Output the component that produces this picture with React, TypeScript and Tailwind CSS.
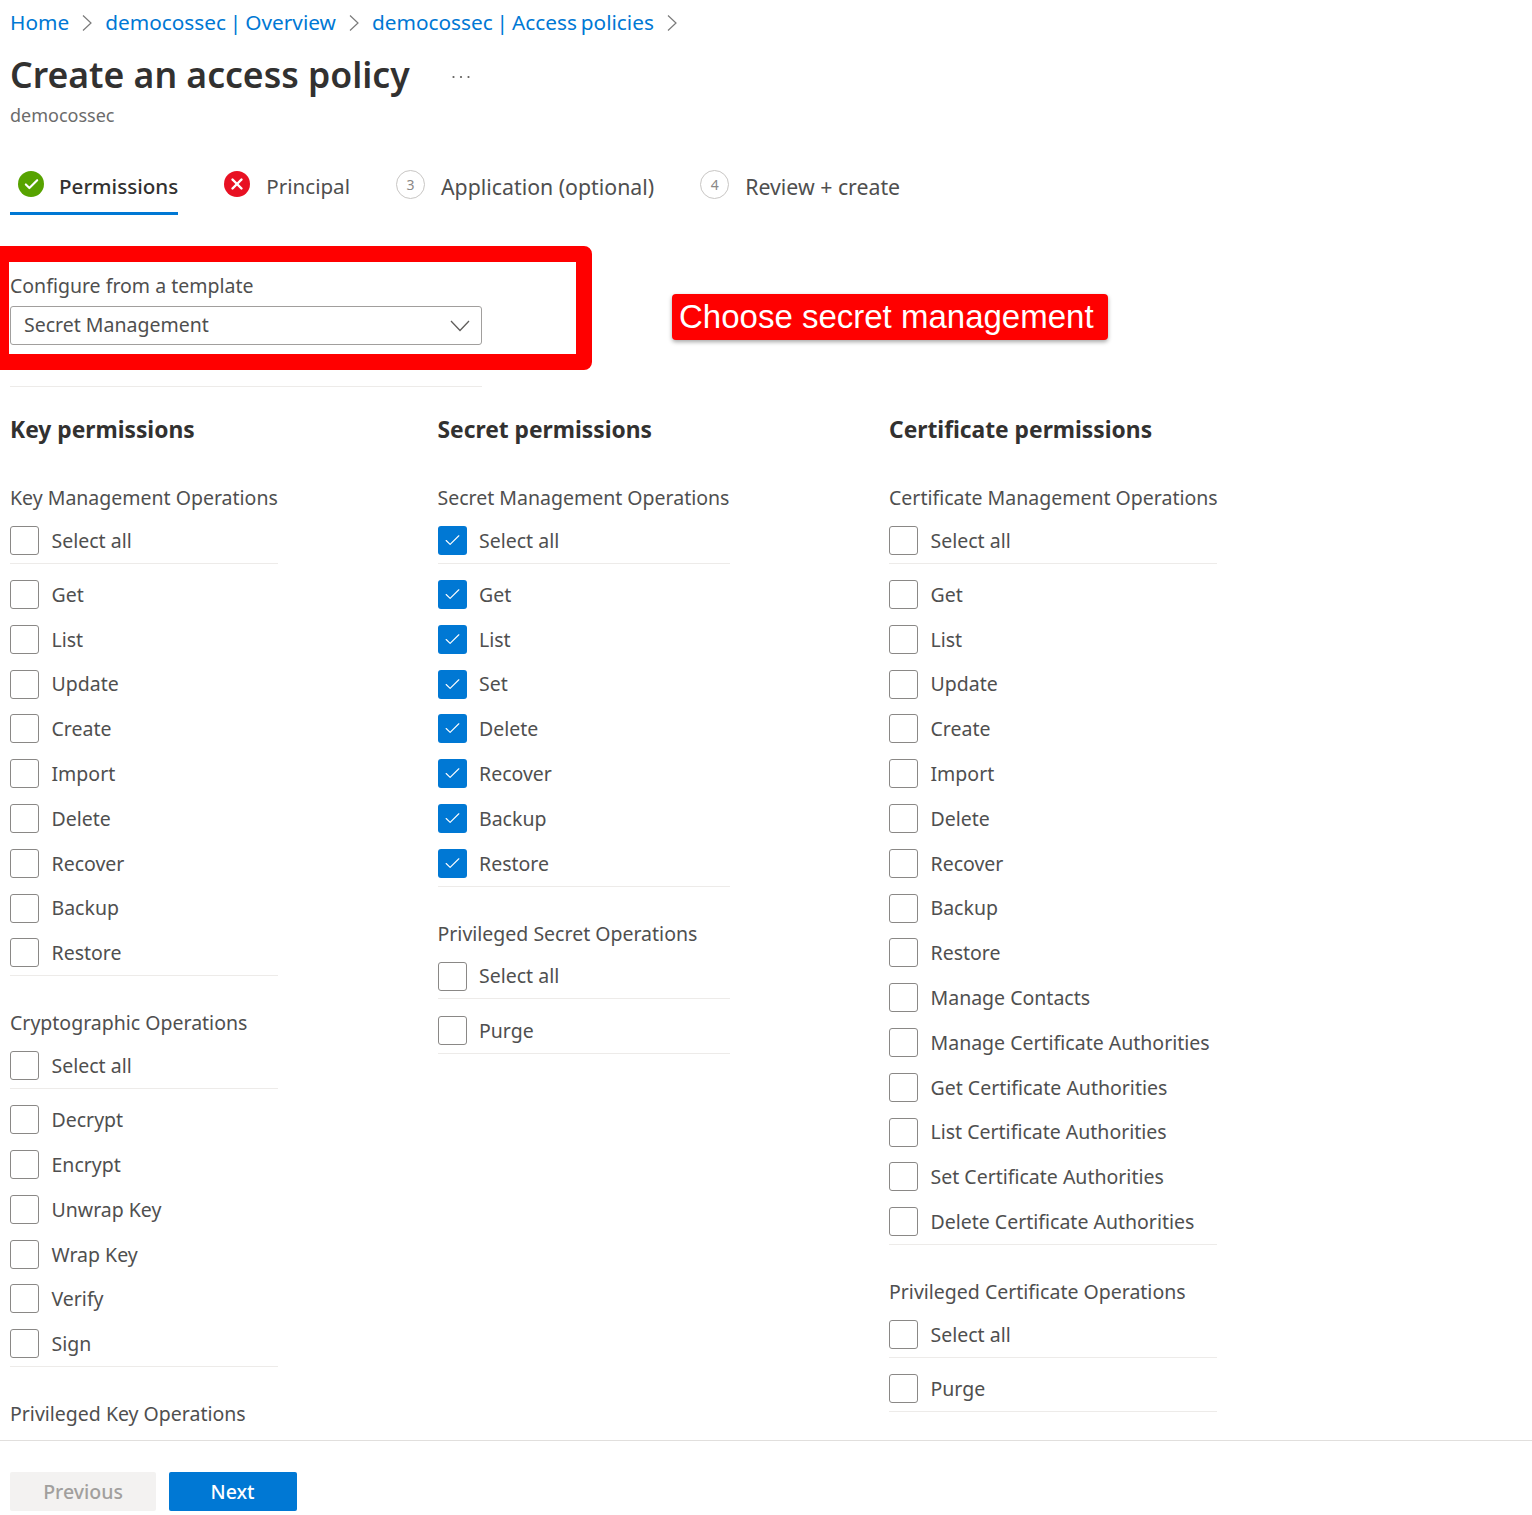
import { Check, X } from 'lucide-react';

type Section = { title: string; checked?: boolean; items: string[] };

const keySections: Section[] = [
  { title: 'Key Management Operations', items: ['Get', 'List', 'Update', 'Create', 'Import', 'Delete', 'Recover', 'Backup', 'Restore'] },
  { title: 'Cryptographic Operations', items: ['Decrypt', 'Encrypt', 'Unwrap Key', 'Wrap Key', 'Verify', 'Sign'] },
  { title: 'Privileged Key Operations', items: [] },
];

const secretSections: Section[] = [
  { title: 'Secret Management Operations', checked: true, items: ['Get', 'List', 'Set', 'Delete', 'Recover', 'Backup', 'Restore'] },
  { title: 'Privileged Secret Operations', items: ['Purge'] },
];

const certSections: Section[] = [
  {
    title: 'Certificate Management Operations',
    items: ['Get', 'List', 'Update', 'Create', 'Import', 'Delete', 'Recover', 'Backup', 'Restore', 'Manage Contacts', 'Manage Certificate Authorities', 'Get Certificate Authorities', 'List Certificate Authorities', 'Set Certificate Authorities', 'Delete Certificate Authorities'],
  },
  { title: 'Privileged Certificate Operations', items: ['Purge'] },
];

function Box({ checked }: { checked?: boolean }) {
  if (checked) {
    return (
      <span className="flex h-[29px] w-[29px] shrink-0 items-center justify-center rounded-[3px] bg-[#0078d4]">
        <Check size={19} strokeWidth={1.4} className="text-white" />
      </span>
    );
  }
  return <span className="h-[29px] w-[29px] shrink-0 rounded-[3px] border border-[#8a8886] bg-white" />;
}

function Row({ label, checked }: { label: string; checked?: boolean }) {
  return (
    <div className="flex h-[44.8px] items-center gap-[12.5px] text-[19.5px] text-[#4f4f4f]">
      <Box checked={checked} />
      <span className="whitespace-nowrap">{label}</span>
    </div>
  );
}

function PermissionGroup({ section }: { section: Section }) {
  return (
    <div className="mb-[24px]">
      <p className="flex h-[43px] items-center whitespace-nowrap pt-[2px] text-[19.5px] text-[#4f4f4f]">{section.title}</p>
      {section.items.length > 0 && (
        <>
          <div className="border-b border-[#edebe9]">
            <Row label="Select all" checked={section.checked} />
          </div>
          <div className="mt-[8.3px] border-b border-[#edebe9]">
            {section.items.map((item) => (
              <Row key={item} label={item} checked={section.checked} />
            ))}
          </div>
        </>
      )}
    </div>
  );
}

function Column({ title, sections, className }: { title: string; sections: Section[]; className: string }) {
  return (
    <div className={className}>
      <h2 className="mb-[29px] flex h-[34px] items-center whitespace-nowrap pt-[2px] text-[22.8px] font-bold text-[#323130]">{title}</h2>
      {sections.map((section) => (
        <PermissionGroup key={section.title} section={section} />
      ))}
    </div>
  );
}

function Crumb({ label }: { label: string }) {
  return (
    <>
      <a className="whitespace-nowrap text-[#0078d4] [word-spacing:-1.5px]">{label}</a>
      <svg width="10" height="18" viewBox="0 0 10 18" fill="none" stroke="#7a7a7a" strokeWidth="1.2" className="mx-[13px]">
        <path d="M1 1.5 9 9l-8 7.5" />
      </svg>
    </>
  );
}

function Step({ n, label }: { n: string; label: string }) {
  return (
    <div className="flex items-center gap-[16px]">
      <span className="mb-[4px] flex h-[29px] w-[29px] items-center justify-center rounded-full border border-[#c8c6c4] text-[14px] text-[#8a8886]">{n}</span>
      <span className="whitespace-nowrap text-[21.3px] text-[#4f4f4f]">{label}</span>
    </div>
  );
}

export default function App() {
  return (
    <div className="relative flex h-[1515px] w-[1532px] flex-col overflow-hidden bg-white font-['Noto_Sans',sans-serif]">
      <div className="h-[1440px] overflow-hidden pl-[10px]">
        <nav className="flex h-[46px] items-center text-[20.8px]">
          <Crumb label="Home" />
          <Crumb label="democossec | Overview" />
          <Crumb label="democossec | Access policies" />
        </nav>
        <div className="flex h-[58px] items-center">
          <h1 className="whitespace-nowrap text-[35.6px] font-semibold text-[#323130]">Create an access policy</h1>
          <svg width="18" height="4" viewBox="0 0 18 4" fill="#605e5c" className="mt-[3px] ml-[42px]">
            <circle cx="1.5" cy="2" r="1.1" />
            <circle cx="9" cy="2" r="1.1" />
            <circle cx="16.5" cy="2" r="1.1" />
          </svg>
        </div>
        <p className="h-[50px] text-[18px] leading-[22px] text-[#6b6b6b]">democossec</p>

        <div className="flex h-[61px] text-[20.6px]">
          <div className="flex items-center gap-[15px] border-b-[3px] border-[#0078d4] pt-[7px] pl-[8px]">
            <span className="mb-[5px] flex h-[26px] w-[26px] items-center justify-center rounded-full bg-[#57a300]">
              <Check size={17} strokeWidth={3} className="text-white" />
            </span>
            <span className="font-medium text-[#323130]">Permissions</span>
          </div>
          <div className="ml-[46px] flex items-center gap-[16px] border-b-[3px] border-transparent pt-[7px]">
            <span className="mb-[5px] flex h-[26px] w-[26px] items-center justify-center rounded-full bg-[#e81123]">
              <X size={18} strokeWidth={3.2} className="text-white" />
            </span>
            <span className="text-[#4f4f4f]">Principal</span>
          </div>
          <div className="ml-[46px] flex items-center gap-[46px] border-b-[3px] border-transparent pt-[7px]">
            <Step n="3" label="Application (optional)" />
            <Step n="4" label="Review + create" />
          </div>
        </div>

        <div className="mt-[59px] w-[472px]">
          <label className="block h-[32px] text-[19.5px] leading-[24px] text-[#4f4f4f]">Configure from a template</label>
          <div className="flex h-[39px] items-center justify-between rounded-[3px] border border-[#a19f9d] pr-[11px] pl-[13px] text-[19.5px] text-[#4f4f4f]">
            <span className="-mt-[1px]">Secret Management</span>
            <svg width="20" height="12" viewBox="0 0 20 12" fill="none" stroke="#605e5c" strokeWidth="1.3">
              <path d="M1 1l9 9.5L19 1" />
            </svg>
          </div>
          <div className="mt-[41px] border-b border-[#edebe9]" />
        </div>

        <div className="mt-[25px] flex items-start">
          <Column title="Key permissions" sections={keySections} className="w-[268px]" />
          <Column title="Secret permissions" sections={secretSections} className="ml-[159.5px] w-[292px]" />
          <Column title="Certificate permissions" sections={certSections} className="ml-[159.5px] w-[328px]" />
        </div>
      </div>

      <div className="flex h-[75px] items-start gap-[12.5px] border-t border-[#e1dfdd] pt-[31px] pl-[10px] text-[19.5px] font-medium">
        <button className="h-[39px] w-[146px] rounded-[2px] bg-[#f3f2f1] text-[#a19f9d]">Previous</button>
        <button className="h-[39px] w-[128px] rounded-[2px] bg-[#0078d4] text-white">Next</button>
      </div>

      <div className="absolute top-[246px] left-0 h-[124px] w-[592px] rounded-r-[8px] border-y-[16px] border-r-[16px] border-l-[9px] border-[#ff0000]" />
      <div className="absolute top-[294px] left-[672px] flex h-[46px] w-[436px] items-center rounded-[4px] bg-[#ff0000] pl-[7px] font-['Liberation_Sans',sans-serif] text-[33px] whitespace-nowrap text-white shadow-[0_2px_4px_rgba(0,0,0,0.35)]">
        Choose secret management
      </div>
    </div>
  );
}
